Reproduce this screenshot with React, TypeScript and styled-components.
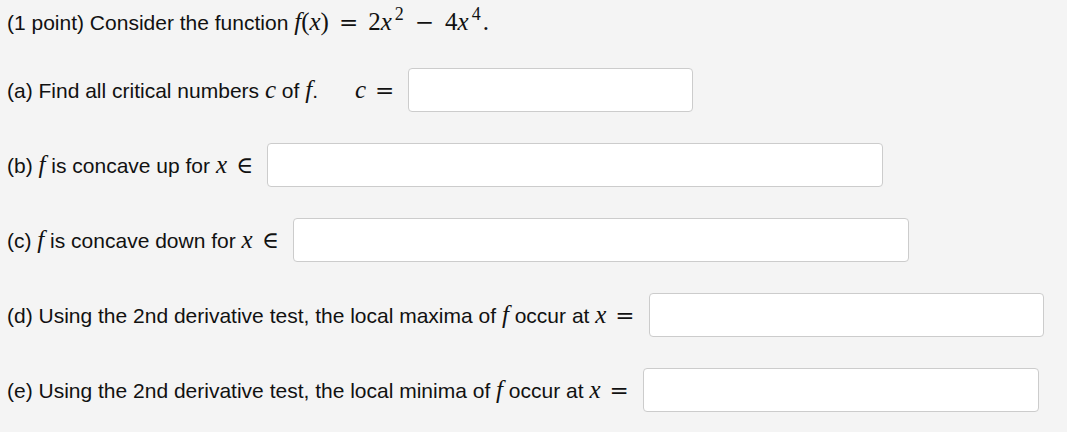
import * as React from 'react';
import styled, { createGlobalStyle } from 'styled-components';

const GlobalStyle = createGlobalStyle`
    html, body {
        margin: 0;
        padding: 0;
        background: #f4f4f4;
    }
`;

const Page = styled.div`
    width: 1067px;
    height: 432px;
    box-sizing: border-box;
    padding: 5px 0 0 7px;
    font-family: "Liberation Sans", Arial, sans-serif;
    font-size: 21px;
    color: #111111;
    background: #f4f4f4;
`;

const Title = styled.div`
    height: 34px;
    display: flex;
    align-items: center;
`;

const Row = styled.div<{ $top: number }>`
    margin-top: ${(p) => p.$top}px;
    height: 44px;
    display: flex;
    align-items: center;
`;

const Label = styled.span<{ $gap?: number }>`
    white-space: pre;
    margin-right: ${(p) => p.$gap ?? 0}px;
`;

const M = styled.span<{ $pre?: number }>`
    font-family: "Liberation Serif", "DejaVu Serif", serif;
    font-style: italic;
    font-size: 25px;
    margin-left: ${(p) => p.$pre ?? 0}px;
`;

const MR = styled.span<{ $pre?: number }>`
    font-family: "Liberation Serif", "DejaVu Serif", serif;
    font-size: 25px;
    margin-left: ${(p) => p.$pre ?? 0}px;
`;

const Op = styled.span<{ $side?: number }>`
    font-family: "DejaVu Serif", "Liberation Serif", serif;
    font-size: 23px;
    margin: 0 ${(p) => p.$side ?? 9}px;
`;

const Sup = styled.sup`
    font-family: "Liberation Serif", "DejaVu Serif", serif;
    font-size: 18px;
    vertical-align: 10px;
    line-height: 0;
    margin-left: 3px;
`;

const Answer = styled.input<{ $w: number }>`
    width: ${(p) => p.$w}px;
    height: 44px;
    box-sizing: border-box;
    border: 1px solid #cccccc;
    border-radius: 4px;
    background: #ffffff;
    padding: 4px 6px;
    font-size: 16px;
    outline: none;
`;

const App: React.FC = (): JSX.Element => {
    return (
        <>
            <GlobalStyle />
            <Page>
                <Title>
                    <Label>
                        (1 point) Consider the function <M>f</M><MR>(</MR><M>x</M><MR>)</MR><Op $side={10}>=</Op><MR>2</MR><M>x</M><Sup>2</Sup><Op $side={11}>−</Op><MR>4</MR><M>x</M><Sup>4</Sup><MR $pre={2}>.</MR>
                    </Label>
                </Title>
                <Row $top={29}>
                    <Label $gap={5}>(a) Find all critical numbers <M>c</M> of <M>f</M>.<M $pre={37}>c</M><Op>=</Op></Label>
                    <Answer $w={285} />
                </Row>
                <Row $top={31}>
                    <Label $gap={5}>(b) <M>f</M> is concave up for <M>x</M><Op>∈</Op></Label>
                    <Answer $w={616} />
                </Row>
                <Row $top={31}>
                    <Label $gap={5}>(c) <M>f</M> is concave down for <M>x</M><Op>∈</Op></Label>
                    <Answer $w={616} />
                </Row>
                <Row $top={31}>
                    <Label $gap={5}>(d) Using the 2nd derivative test, the local maxima of <M>f</M> occur at <M>x</M><Op>=</Op></Label>
                    <Answer $w={395} />
                </Row>
                <Row $top={31}>
                    <Label $gap={5}>(e) Using the 2nd derivative test, the local minima of <M>f</M> occur at <M>x</M><Op>=</Op></Label>
                    <Answer $w={396} />
                </Row>
            </Page>
        </>
    );
};

export default App;
